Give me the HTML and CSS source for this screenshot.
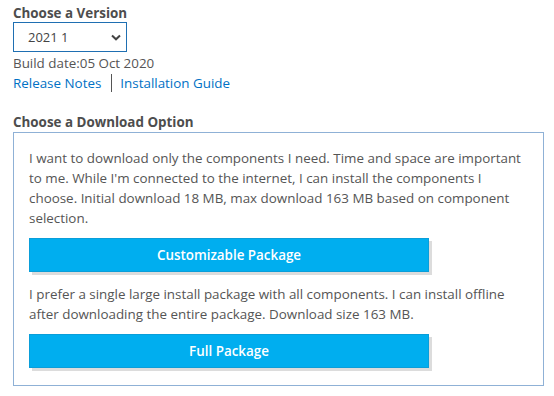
FILE: index.html
```html
<!DOCTYPE html>
<html>
<head>
<meta charset="utf-8">
<link rel="stylesheet" href="styles.css">
</head>
<body>
<div class="page">
  <section class="version">
    <h3 class="label">Choose a Version</h3>
    <div class="select">
      <span class="select-value">2021 1</span>
      <svg class="chevron" width="10" height="7" viewBox="0 0 10 7"><path d="M1 1.5 L5 5.3 L9 1.5" fill="none" stroke="#444" stroke-width="2"/></svg>
    </div>
    <div class="build">Build date:05 Oct 2020</div>
    <div class="links">
      <a class="link" href="#">Release Notes</a>
      <span class="sep"></span>
      <a class="link" href="#">Installation Guide</a>
    </div>
  </section>
  <section class="download">
    <h3 class="label">Choose a Download Option</h3>
    <div class="options">
      <p class="desc">I want to download only the components I need. Time and space are important to me. While I'm connected to the internet, I can install the components I choose. Initial download 18 MB, max download 163 MB based on component selection.</p>
      <button class="btn">Customizable Package</button>
      <p class="desc desc-after">I prefer a single large install package with all components. I can install offline after downloading the entire package. Download size 163 MB.</p>
      <button class="btn">Full Package</button>
    </div>
  </section>
</div>
</body>
</html>
```
FILE: styles.css
```css
html, body { margin: 0; padding: 0; background: #fff; }
body { font-family: "Open Sans", "Noto Sans", sans-serif; color: #555; font-size: 13.4px; }
.page { padding: 4px 11px 0 13px; }
.label { margin: 0; font-size: 13.4px; font-weight: 700; color: #4d4d4d; line-height: 18px; }
.select {
  height: 28px;
  border: 1px solid #1f6fb2;
  display: flex; align-items: center; justify-content: space-between;
  padding: 0 5px 0 14px;
  width: 93px;
}
.select-value { font-size: 13px; color: #444; }
.chevron { display: block; margin-top: 1px; }
.build { line-height: 20px; margin-top: 1px; }
.links { display: flex; align-items: center; line-height: 20px; }
.link { color: #0071c5; text-decoration: none; }
.sep { width: 1px; height: 18px; background: #555; margin: 0 8px 0 10px; }
.download { margin-top: 20px; }
.options {
  margin-top: 1px;
  border: 1px solid #8fb1d6;
  padding: 15px 15px 17px 15px;
  width: 499px;
}
.desc { margin: 0; line-height: 20px; }
.desc-after { margin-top: 12px; }
.btn {
  display: block;
  box-sizing: border-box;
  width: 400px; height: 34px;
  margin: 10px 0 0;
  background: #00aeef;
  border: 1px solid #0a9ed9;
  color: #fff;
  font-family: inherit; font-size: 13.4px; font-weight: 600;
  box-shadow: 3px 3px 0 #dcdcdc;
  padding: 0;
}
```
